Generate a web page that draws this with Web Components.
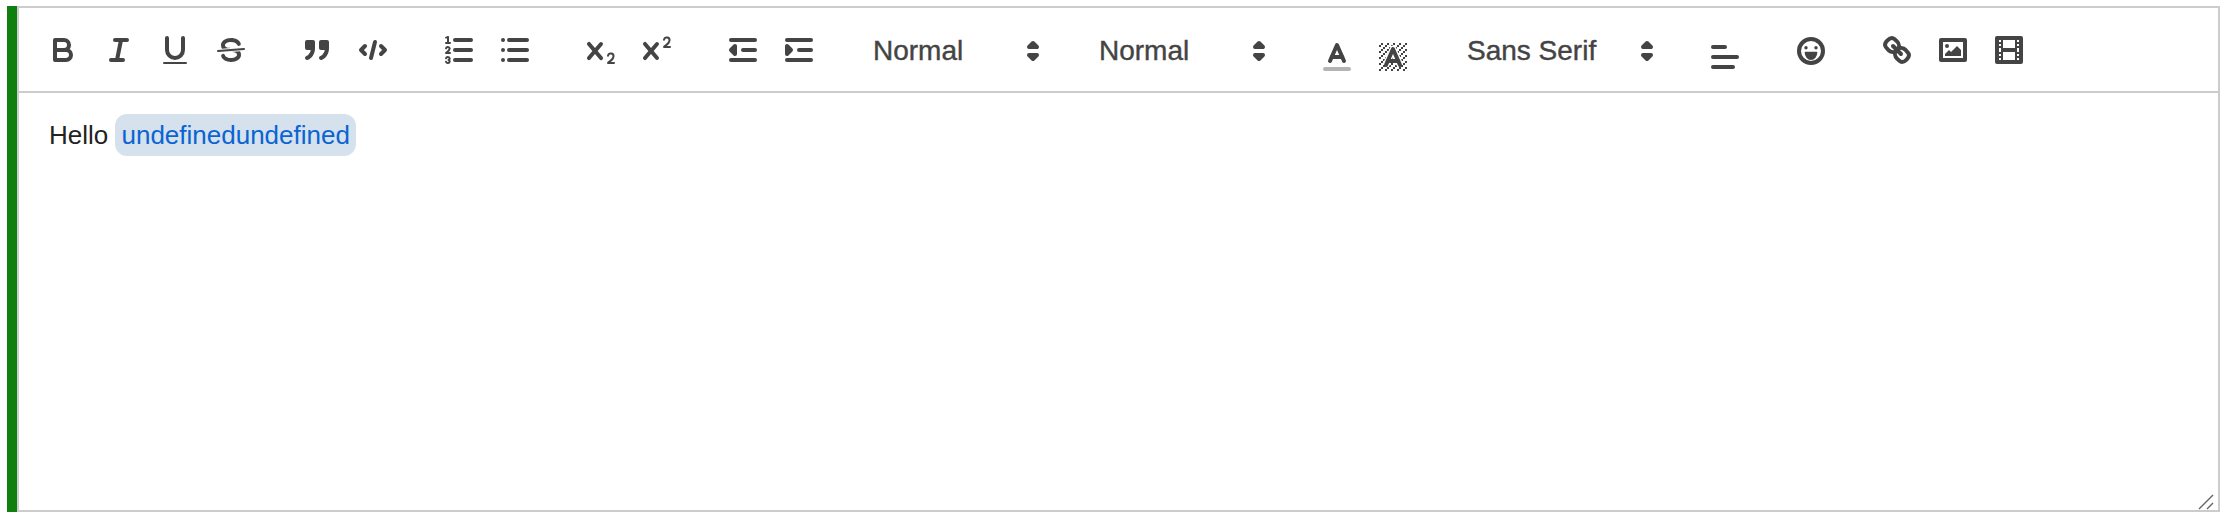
<!DOCTYPE html>
<html>
<head>
<meta charset="utf-8">
<title>Editor</title>
<style>
  html, body { margin: 0; background: #fff; }
  body { padding: 6px 8px 0 7px; font-family: "Liberation Sans", Arial, sans-serif; }
</style>
</head>
<body>
<rich-editor>
  <editor-toolbar slot="toolbar">
    <tool-group>
      <tool-button icon="bold"></tool-button>
      <tool-button icon="italic"></tool-button>
      <tool-button icon="underline"></tool-button>
      <tool-button icon="strike"></tool-button>
    </tool-group>
    <tool-group>
      <tool-button icon="blockquote"></tool-button>
      <tool-button icon="code"></tool-button>
    </tool-group>
    <tool-group>
      <tool-button icon="ordered"></tool-button>
      <tool-button icon="bullet"></tool-button>
    </tool-group>
    <tool-group>
      <tool-button icon="sub"></tool-button>
      <tool-button icon="super"></tool-button>
    </tool-group>
    <tool-group>
      <tool-button icon="outdent"></tool-button>
      <tool-button icon="indent"></tool-button>
    </tool-group>
    <tool-group><tool-picker size="196">Normal</tool-picker></tool-group>
    <tool-group><tool-picker size="196">Normal</tool-picker></tool-group>
    <tool-group>
      <tool-button icon="color" low></tool-button>
      <tool-button icon="background" low></tool-button>
    </tool-group>
    <tool-group><tool-picker size="216">Sans Serif</tool-picker></tool-group>
    <tool-group><tool-button icon="align" low></tool-button></tool-group>
    <tool-group><tool-button icon="emoji"></tool-button></tool-group>
    <tool-group>
      <tool-button icon="link"></tool-button>
      <tool-button icon="image"></tool-button>
      <tool-button icon="video"></tool-button>
    </tool-group>
  </editor-toolbar>
  <editor-body>Hello <mention-chip>undefinedundefined</mention-chip></editor-body>
</rich-editor>

<script>
const ICONS = {
  bold: '<path class="s" d="M5,4H9.5A2.5,2.5,0,0,1,12,6.5v0A2.5,2.5,0,0,1,9.5,9H5V4Z"/><path class="s" d="M5,9h5.5A2.5,2.5,0,0,1,13,11.5v0A2.5,2.5,0,0,1,10.5,14H5V9Z"/>',
  italic: '<line class="s" x1="7" x2="13" y1="4" y2="4"/><line class="s" x1="5" x2="11" y1="14" y2="14"/><line class="s" x1="8" x2="10" y1="14" y2="4"/>',
  underline: '<path class="s" d="M5,3V9a4.012,4.012,0,0,0,4,4H9a4.012,4.012,0,0,0,4-4V3"/><rect class="f" height="1" rx="0.5" ry="0.5" width="12" x="3" y="15"/>',
  strike: '<line class="s t" x1="15.5" x2="2.5" y1="8.5" y2="9.5"/><path class="f" d="M9.007,8C6.542,7.791,6,7.519,6,6.5,6,5.792,7.283,5,9,5c1.571,0,2.765.679,2.969,1.309a1,1,0,0,0,1.9-.617C13.356,4.106,11.354,3,9,3,6.2,3,4,4.538,4,6.5a3.2,3.2,0,0,0,.5,1.843Z"/><path class="f" d="M8.984,10C11.457,10.208,12,10.479,12,11.5c0,.708-1.283,1.5-3,1.5-1.571,0-2.765-.679-2.969-1.309a1,1,0,1,0-1.9.617C4.644,13.894,6.646,15,9,15c2.8,0,5-1.538,5-3.5a3.2,3.2,0,0,0-.5-1.843Z"/>',
  blockquote: '<rect class="f s" height="3" width="3" x="4" y="5"/><rect class="f s" height="3" width="3" x="11" y="5"/><path class="f s" d="M7,8c0,4.031-3,5-3,5"/><path class="f s" d="M14,8c0,4.031-3,5-3,5"/>',
  code: '<polyline class="s" points="5 7 3 9 5 11"/><polyline class="s" points="13 7 15 9 13 11"/><line class="s" x1="10" x2="8" y1="5" y2="13"/>',
  ordered: '<line class="s" x1="7" x2="15" y1="4" y2="4"/><line class="s" x1="7" x2="15" y1="9" y2="9"/><line class="s" x1="7" x2="15" y1="14" y2="14"/><line class="s t" x1="2.5" x2="4.5" y1="5.5" y2="5.5"/><path class="f" d="M3.5,6A0.5,0.5,0,0,1,3,5.5V3.085l-0.276.138A0.5,0.5,0,0,1,2.053,3c-0.124-.247-0.023-0.324.224-0.447l1-.5A0.5,0.5,0,0,1,4,2.5v3A0.5,0.5,0,0,1,3.5,6Z"/><path class="s t" d="M4.5,10.5h-2c0-.234,1.85-1.076,1.85-2.234A0.959,0.959,0,0,0,2.5,8.156"/><path class="s t" d="M2.5,14.846a0.959,0.959,0,0,0,1.85-.109A0.7,0.7,0,0,0,3.75,14a0.688,0.688,0,0,0,.6-0.736,0.959,0.959,0,0,0-1.85-.109"/>',
  bullet: '<line class="s" x1="6" x2="15" y1="4" y2="4"/><line class="s" x1="6" x2="15" y1="9" y2="9"/><line class="s" x1="6" x2="15" y1="14" y2="14"/><line class="s" x1="3" x2="3" y1="4" y2="4"/><line class="s" x1="3" x2="3" y1="9" y2="9"/><line class="s" x1="3" x2="3" y1="14" y2="14"/>',
  sub: '<path class="f" d="M15.5,15H13.861a3.858,3.858,0,0,0,1.914-2.975,1.8,1.8,0,0,0-1.6-1.751A1.921,1.921,0,0,0,12.021,11.7a0.50013,0.50013,0,1,0,.957.291h0a0.914,0.914,0,0,1,1.053-.725,0.81,0.81,0,0,1,.744.762c0,1.076-1.16971,1.86-1.93971,2.43A1.45639,1.45639,0,0,0,12,15.5a0.5,0.5,0,0,0,.5.5h3A0.5,0.5,0,0,0,15.5,15Z"/><path class="f" d="M9.65,5.241a1,1,0,0,0-1.409.108L6,7.964,3.759,5.349A1,1,0,0,0,2.192,6.59178Q2.21541,6.62,2.241,6.649L4.684,9.5,2.241,12.35A1,1,0,0,0,3.71,13.70722q0.02557-.02768.049-0.05722L6,11.036,8.241,13.65a1,1,0,1,0,1.567-1.24277Q9.78459,12.38,9.759,12.35L7.316,9.5,9.759,6.651A1,1,0,0,0,9.65,5.241Z"/>',
  super: '<path class="f" d="M15.5,7H13.861a4.015,4.015,0,0,0,1.914-2.975,1.8,1.8,0,0,0-1.6-1.751A1.922,1.922,0,0,0,12.021,3.7a0.5,0.5,0,1,0,.957.291,0.917,0.917,0,0,1,1.053-.725,0.81,0.81,0,0,1,.744.762c0,1.077-1.164,1.925-1.934,2.486A1.423,1.423,0,0,0,12,7.5a0.5,0.5,0,0,0,.5.5h3A0.5,0.5,0,0,0,15.5,7Z"/><path class="f" d="M9.651,5.241a1,1,0,0,0-1.41.108L6,7.964,3.759,5.349a1,1,0,1,0-1.519,1.3L4.683,9.5,2.241,12.35a1,1,0,1,0,1.519,1.3L6,11.036l2.241,2.614a1,1,0,0,0,1.519-1.3L7.317,9.5,9.759,6.651A1,1,0,0,0,9.651,5.241Z"/>',
  outdent: '<line class="s" x1="3" x2="15" y1="14" y2="14"/><line class="s" x1="3" x2="15" y1="4" y2="4"/><line class="s" x1="9" x2="15" y1="9" y2="9"/><polyline class="f s" points="5 7 5 11 3 9 5 7"/>',
  indent: '<line class="s" x1="3" x2="15" y1="14" y2="14"/><line class="s" x1="3" x2="15" y1="4" y2="4"/><line class="s" x1="9" x2="15" y1="9" y2="9"/><polyline class="f s" points="3 7 3 11 5 9 3 7"/>',
  color: '<line class="s" opacity="0.4" x1="3" x2="15" y1="15" y2="15"/><polyline class="s" points="5.5 11 9 3 12.5 11"/><line class="s" x1="11.63" x2="6.38" y1="9" y2="9"/>',
  background: '<defs><pattern id="hatch" patternUnits="userSpaceOnUse" width="3" height="3"><rect x="0" y="2" width="1" height="1" fill="#444"/><rect x="1" y="1" width="1" height="1" fill="#444"/><rect x="2" y="0" width="1" height="1" fill="#444"/></pattern></defs><rect x="2" y="2" width="14" height="14" fill="url(#hatch)"/><polyline points="5.5 13 9 5 12.5 13" fill="none" stroke="#fff" stroke-width="3.4" stroke-linejoin="round"/><polyline class="s" points="5.5 13 9 5 12.5 13"/><line class="s" x1="11.63" x2="6.38" y1="11" y2="11"/>',
  align: '<line class="s" x1="3" x2="15" y1="9" y2="9"/><line class="s" x1="3" x2="13" y1="14" y2="14"/><line class="s" x1="3" x2="9" y1="4" y2="4"/>',
  emoji: '<circle class="s" cx="9" cy="9.5" r="6"/><circle class="f" cx="6.5" cy="7.85" r="0.85"/><circle class="f" cx="11.5" cy="7.85" r="0.85"/><path class="f" d="M6.2,9.9h5.6c.2,0,.35,.15,.35,.35a3.15,3.75,0,0,1-6.3,0c0-.2,.15-.35,.35-.35Z"/>',
  link: '<line class="s" x1="7" x2="11" y1="7" y2="11"/><path class="s" d="M8.9,4.577a3.476,3.476,0,0,1,.36,4.679A3.476,3.476,0,0,1,4.577,8.9C3.185,7.5,2.035,6.4,4.217,4.217S7.5,3.185,8.9,4.577Z"/><path class="s" d="M13.423,9.1a3.476,3.476,0,0,0-4.679-.36,3.476,3.476,0,0,0,.36,4.679c1.392,1.392,2.5,2.542,4.679.36S14.815,10.5,13.423,9.1Z"/>',
  image: '<rect class="s" height="10" width="12" x="3" y="4"/><circle class="f" cx="6" cy="7" r="1"/><polyline class="f" points="5 12 5 11 7 9 8 10 11 7 13 9 13 12 5 12"/>',
  video: '<rect class="s" height="12" width="12" x="3" y="3"/><rect class="f" height="12" width="1" x="5" y="3"/><rect class="f" height="12" width="1" x="12" y="3"/><rect class="f" height="2" width="8" x="5" y="8"/><rect class="f" height="1" width="3" x="3" y="5"/><rect class="f" height="1" width="3" x="3" y="7"/><rect class="f" height="1" width="3" x="3" y="10"/><rect class="f" height="1" width="3" x="3" y="12"/><rect class="f" height="1" width="3" x="12" y="5"/><rect class="f" height="1" width="3" x="12" y="7"/><rect class="f" height="1" width="3" x="12" y="10"/><rect class="f" height="1" width="3" x="12" y="12"/>'
};

class RichEditor extends HTMLElement {
  constructor() {
    super();
    this.attachShadow({mode: 'open'}).innerHTML = `
      <style>
        :host {
          display: flex;
          flex-direction: column;
          position: relative;
          box-sizing: border-box;
          height: 506px;
          border: 2px solid #ccc;
          border-left: 0;
          background: #fff;
        }
        .bar {
          position: absolute;
          left: 0;
          top: -2px;
          bottom: -2px;
          width: 10px;
          background: #0f7f0f;
        }
        .inner {
          flex: 1;
          display: flex;
          flex-direction: column;
          margin-left: 10px;
          border-left: 2px solid #ccc;
        }
        .grip {
          position: absolute;
          right: 2px;
          bottom: 0;
        }
      </style>
      <div class="bar"></div>
      <div class="inner">
        <slot name="toolbar"></slot>
        <slot></slot>
      </div>
      <svg class="grip" width="18" height="16" viewBox="0 0 18 16" fill="none" stroke="#666" stroke-width="1.5">
        <line x1="1" y1="15" x2="15" y2="1"/>
        <line x1="9" y1="15" x2="15" y2="9"/>
      </svg>`;
  }
}

class EditorToolbar extends HTMLElement {
  constructor() {
    super();
    this.attachShadow({mode: 'open'}).innerHTML = `
      <style>
        :host {
          display: flex;
          align-items: flex-start;
          box-sizing: border-box;
          height: 85px;
          padding: 18px 16px 0;
          border-bottom: 2px solid #ccc;
        }
      </style>
      <slot></slot>`;
  }
}

class ToolGroup extends HTMLElement {
  constructor() {
    super();
    this.attachShadow({mode: 'open'}).innerHTML = `
      <style>
        :host {
          display: flex;
          align-items: flex-start;
          margin-right: 30px;
        }
      </style>
      <slot></slot>`;
  }
}

class ToolButton extends HTMLElement {
  constructor() {
    super();
    this.attachShadow({mode: 'open'});
  }

  connectedCallback() {
    this.shadowRoot.innerHTML = `
      <style>
        :host {
          display: block;
          box-sizing: border-box;
          width: 56px;
          height: 48px;
          padding: 6px 10px;
        }
        :host([low]) { margin-top: 7px; }
        svg { display: block; width: 36px; height: 36px; }
        .s { fill: none; stroke: #444; stroke-width: 2; stroke-linecap: round; stroke-linejoin: round; }
        .t { stroke-width: 1; }
        .f { fill: #444; }
      </style>
      <svg viewBox="0 0 18 18">${ICONS[this.getAttribute('icon')]}</svg>`;
  }
}

class ToolPicker extends HTMLElement {
  constructor() {
    super();
    this.attachShadow({mode: 'open'});
  }

  connectedCallback() {
    this.shadowRoot.innerHTML = `
      <style>
        :host {
          display: flex;
          align-items: center;
          justify-content: space-between;
          box-sizing: border-box;
          width: ${this.getAttribute('size')}px;
          height: 48px;
          margin-top: 1px;
          padding: 0 2px 0 16px;
          color: #444;
          font-size: 28px;
          -webkit-text-stroke: 0.4px #444;
        }
        svg { display: block; width: 36px; height: 36px; flex: none; }
        polygon { fill: #444; stroke: #444; stroke-width: 2; stroke-linejoin: round; }
      </style>
      <slot></slot>
      <svg viewBox="0 0 18 18">
        <polygon points="7 11 9 13 11 11 7 11"/>
        <polygon points="7 7 9 5 11 7 7 7"/>
      </svg>`;
  }
}

class EditorBody extends HTMLElement {
  constructor() {
    super();
    this.attachShadow({mode: 'open'}).innerHTML = `
      <style>
        :host {
          display: block;
          padding: 24px 30px;
          color: #222;
          font-size: 26px;
          line-height: 37px;
        }
      </style>
      <slot></slot>`;
  }
}

class MentionChip extends HTMLElement {
  constructor() {
    super();
    this.attachShadow({mode: 'open'}).innerHTML = `
      <style>
        :host {
          display: inline;
          padding: 6px;
          border-radius: 12px;
          background: #d5e1ec;
          color: #0a64d2;
        }
      </style>
      <slot></slot>`;
  }
}

customElements.define('rich-editor', RichEditor);
customElements.define('editor-toolbar', EditorToolbar);
customElements.define('tool-group', ToolGroup);
customElements.define('tool-button', ToolButton);
customElements.define('tool-picker', ToolPicker);
customElements.define('editor-body', EditorBody);
customElements.define('mention-chip', MentionChip);
</script>
</body>
</html>
